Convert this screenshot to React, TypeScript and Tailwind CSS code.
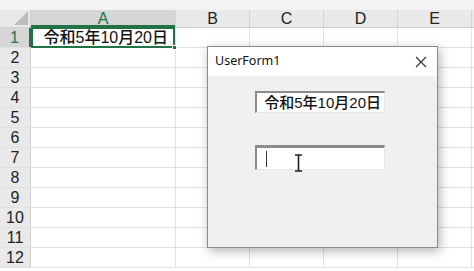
import React from "react";

const cols = ["B", "C", "D", "E"];
const rows = Array.from({ length: 12 }, (_, i) => i + 1);

function IBeam() {
  return (
    <svg width="9" height="18" viewBox="0 0 9 18" className="absolute left-[294px] top-[154px]">
      <path d="M1 1h7M1 17h7M4.5 1v16" stroke="#222" strokeWidth="1.6" fill="none" />
    </svg>
  );
}

export default function App() {
  return (
    <div className="relative w-[474px] h-[271px] overflow-hidden bg-white font-['Liberation_Sans','Noto_Sans_CJK_JP',sans-serif]">
      {/* top strip */}
      <div className="h-[10px] bg-[#f3f3f3]" />

      {/* column headers */}
      <div className="flex h-[18px] bg-[#e9e9e9] border-b border-[#cfcfcf]">
        <div className="w-[31px] relative border-r border-[#cfcfcf]">
          <svg width="14" height="14" viewBox="0 0 14 14" className="absolute right-[2px] bottom-[2px]">
            <polygon points="14,0 14,14 0,14" fill="#bdbdbd" />
          </svg>
        </div>
        <div className="w-[144px] flex items-center justify-center bg-[#d6d6d6] border-b-2 border-[#217346] text-[16px] text-[#217346] leading-none pt-[2px]">
          A
        </div>
        {cols.map((c) => (
          <div
            key={c}
            className="w-[74px] flex items-center justify-center border-l border-[#d4d4d4] text-[16px] text-[#222] leading-none"
          >
            {c}
          </div>
        ))}
        <div className="flex-1 border-l border-[#d4d4d4]" />
      </div>

      {/* rows */}
      {rows.map((r) => (
        <div key={r} className="flex h-[20px] border-b border-[#e1e1e1]">
          <div
            className={
              r === 1
                ? "w-[31px] flex items-center justify-center bg-[#d6d6d6] border-r-2 border-[#217346] text-[16px] text-[#217346] leading-none"
                : "w-[31px] flex items-center justify-center bg-[#e9e9e9] border-r border-[#cfcfcf] text-[16px] text-[#222] leading-none"
            }
          >
            {r}
          </div>
          <div
            className={
              r === 1
                ? "relative w-[144px] flex items-center justify-end pr-[5px] border-2 border-[#217346] -my-px text-[16px] font-medium text-[#111] leading-none"
                : "w-[144px]"
            }
          >
            {r === 1 && (
              <>
                令和5年10月20日
                <span className="absolute -right-[4px] -bottom-[4px] w-[5px] h-[5px] bg-[#217346] border border-white" />
              </>
            )}
          </div>
          {cols.map((c) => (
            <div key={c} className="w-[74px] border-l border-[#e1e1e1]" />
          ))}
          <div className="flex-1 border-l border-[#e1e1e1]" />
        </div>
      ))}

      {/* UserForm dialog */}
      <div className="absolute left-[207px] top-[46px] w-[231px] h-[202px] flex flex-col border border-[#8a8a8a] bg-[#f0f0f0] shadow-[2px_3px_10px_rgba(0,0,0,0.3)]">
        <div className="h-[29px] bg-white flex items-center justify-between pl-[7px] pr-[10px]">
          <span className="text-[12.5px] text-[#111] font-['Noto_Sans','Liberation_Sans',sans-serif]">UserForm1</span>
          <svg width="12" height="12" viewBox="0 0 12 12">
            <path d="M1 1l10 10M11 1L1 11" stroke="#333" strokeWidth="1.1" fill="none" />
          </svg>
        </div>
        <div className="flex-1 flex flex-col items-start pl-[47px] pt-[15px]">
          <div className="w-[130px] h-[22px] bg-white border-t-2 border-l-2 border-[#8c8c8c] border-r border-b border-r-[#e6e6e6] border-b-[#e6e6e6] flex items-center justify-end pr-[3px] text-[15px] font-medium text-[#111] leading-none">
            令和5年10月20日
          </div>
          <div className="mt-[32px] w-[130px] h-[25px] bg-white border-t-[3px] border-l-2 border-[#8c8c8c] border-r border-b border-r-[#e6e6e6] border-b-[#e6e6e6] flex items-center pl-[9px]">
            <span className="w-px h-[16px] bg-[#333]" />
          </div>
        </div>
      </div>
      <IBeam />
    </div>
  );
}
